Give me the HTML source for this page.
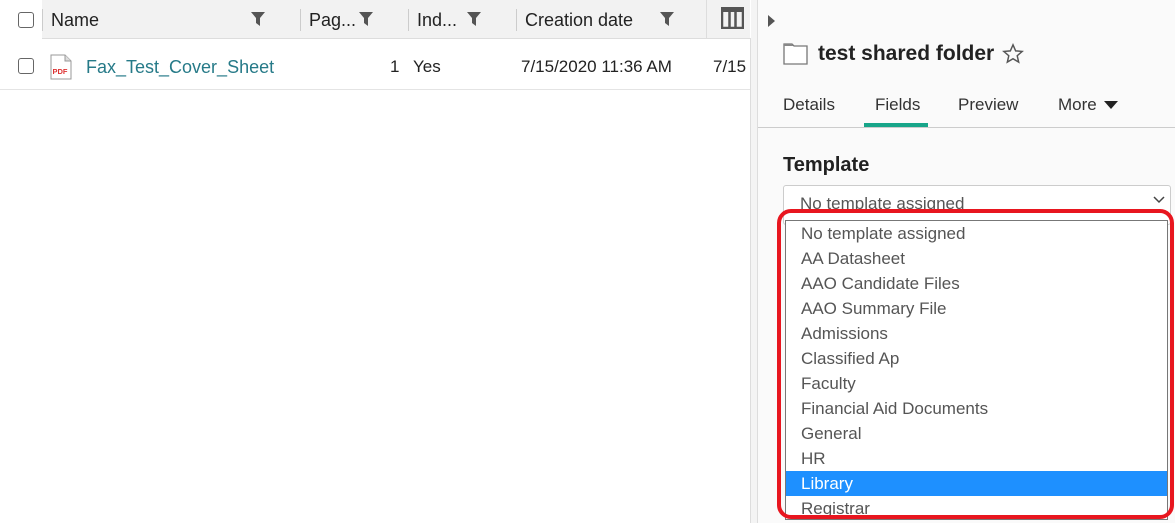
<!DOCTYPE html>
<html><head><style>
*{margin:0;padding:0;box-sizing:border-box}
body{width:1175px;height:523px;overflow:hidden;background:#fff;font-family:"Liberation Sans",sans-serif;position:relative;color:#222}
.a{position:absolute}
.hdr{left:42px;top:0;width:708px;height:39px;background:#f2f2f2;border-bottom:1px solid #ddd}
.cb{width:16px;height:16px;border:1.5px solid #666;border-radius:3px;background:#fff}
.sep{width:1px;height:22px;background:#ccc;top:9px}
.ht{font-size:18px;top:10px;color:#222}
.flt{top:11px}
.lst div{height:25px;line-height:25px;padding-left:15px;font-size:17px;color:#555}
</style></head><body>
<div class="a hdr"></div>
<div class="a cb" style="left:18px;top:12px"></div>
<div class="a sep" style="left:42px"></div>
<div class="a ht" style="left:51px">Name</div>
<div class="a sep" style="left:300px"></div>
<div class="a ht" style="left:309px">Pag...</div>
<div class="a sep" style="left:408px"></div>
<div class="a ht" style="left:417px">Ind...</div>
<div class="a sep" style="left:516px"></div>
<div class="a ht" style="left:525px">Creation date</div>
<div class="a sep" style="left:706px;top:0;height:39px;background:#ddd"></div>
<svg class="a flt" style="left:251px" width="14" height="16" viewBox="0 0 14 16"><path d="M0 1h14L9 7v8l-4-3V7z" fill="#555"/></svg>
<svg class="a flt" style="left:359px" width="14" height="16" viewBox="0 0 14 16"><path d="M0 1h14L9 7v8l-4-3V7z" fill="#555"/></svg>
<svg class="a flt" style="left:467px" width="14" height="16" viewBox="0 0 14 16"><path d="M0 1h14L9 7v8l-4-3V7z" fill="#555"/></svg>
<svg class="a flt" style="left:660px" width="14" height="16" viewBox="0 0 14 16"><path d="M0 1h14L9 7v8l-4-3V7z" fill="#555"/></svg>
<svg class="a" style="left:721px;top:7px" width="23" height="22" viewBox="0 0 23 22"><rect x="1" y="1" width="21" height="20" fill="none" stroke="#555" stroke-width="2.5"/><rect x="1" y="1" width="21" height="4" fill="#555"/><path d="M8.5 3v18M14.5 3v18" stroke="#555" stroke-width="2.5"/></svg>
<div class="a cb" style="left:18px;top:58px"></div>
<svg class="a" style="left:50px;top:54px" width="22" height="26" viewBox="0 0 22 26"><path d="M1 1h14l6 6v18H1z" fill="#fff" stroke="#999"/><path d="M15 1v6h6" fill="#ddd" stroke="#999"/><text x="2.5" y="20" font-size="7.5" font-weight="bold" fill="#d33" font-family="Liberation Sans">PDF</text></svg>
<div class="a" style="left:86px;top:57px;font-size:18px;color:#267a88">Fax_Test_Cover_Sheet</div>
<div class="a" style="left:390px;top:57px;font-size:17px">1</div>
<div class="a" style="left:413px;top:57px;font-size:17px">Yes</div>
<div class="a" style="left:521px;top:57px;font-size:17px">7/15/2020 11:36 AM</div>
<div class="a" style="left:713px;top:57px;font-size:17px">7/15</div>
<div class="a" style="left:0;top:89px;width:750px;height:1px;background:#e4e4e4"></div>
<div class="a" style="left:750px;top:38px;width:1px;height:485px;background:#ddd"></div>
<div class="a" style="left:751px;top:0;width:6px;height:523px;background:#f4f4f4"></div>
<div class="a" style="left:757px;top:0;width:418px;height:523px;background:#fafafa;border-left:1px solid #ddd"></div>
<svg class="a" style="left:768px;top:15px" width="8" height="12"><path d="M0 0l7 6-7 6z" fill="#555"/></svg>
<svg class="a" style="left:783px;top:42px" width="25" height="23" viewBox="0 0 25 23"><path d="M1 4V2h8l2 2h13v18H1z" fill="#fff" stroke="#777" stroke-width="1.3"/><path d="M1 2h8l1 2H1z" fill="#888"/></svg>
<div class="a" style="left:818px;top:42px;font-size:21px;font-weight:bold;color:#222">test shared folder</div>
<svg class="a" style="left:1002px;top:43px" width="22" height="22" viewBox="0 0 24 24"><path d="M12 2l2.9 6.6 7.1.6-5.4 4.7 1.6 7-6.2-3.7-6.2 3.7 1.6-7L2 9.2l7.1-.6z" fill="none" stroke="#555" stroke-width="1.6"/></svg>
<div class="a" style="left:783px;top:95px;font-size:17px;color:#333">Details</div>
<div class="a" style="left:875px;top:95px;font-size:17px;color:#333">Fields</div>
<div class="a" style="left:864px;top:123px;width:64px;height:4px;background:#17a589"></div>
<div class="a" style="left:958px;top:95px;font-size:17px;color:#333">Preview</div>
<div class="a" style="left:1058px;top:95px;font-size:17px;color:#333">More</div>
<svg class="a" style="left:1104px;top:101px" width="14" height="8"><path d="M0 0h14L7 8z" fill="#222"/></svg>
<div class="a" style="left:758px;top:127px;width:417px;height:1px;background:#ccc"></div>
<div class="a" style="left:783px;top:154px;font-size:20px;font-weight:bold;color:#222">Template</div>
<div class="a" style="left:783px;top:185px;width:388px;height:40px;background:#fff;border:1px solid #ccc;border-radius:3px;overflow:hidden"><div style="padding:8px 0 0 16px;font-size:17px;color:#555">No template assigned</div></div>
<svg class="a" style="left:1153px;top:196px" width="12" height="8"><path d="M1 1l5 5 5-5" fill="none" stroke="#444" stroke-width="1.5"/></svg>
<div class="a lst" style="left:785px;top:220px;width:383px;height:300px;background:#fff;border:1px solid #777;overflow:hidden">
<div>No template assigned</div><div>AA Datasheet</div><div>AAO Candidate Files</div><div>AAO Summary File</div><div>Admissions</div><div>Classified Ap</div><div>Faculty</div><div>Financial Aid Documents</div><div>General</div><div>HR</div><div style="background:#1e90ff;color:#fff">Library</div><div>Registrar</div>
</div>
<div class="a" style="left:777px;top:209px;width:397px;height:310px;border:4px solid #e8161f;border-radius:14px"></div>
</body></html>
